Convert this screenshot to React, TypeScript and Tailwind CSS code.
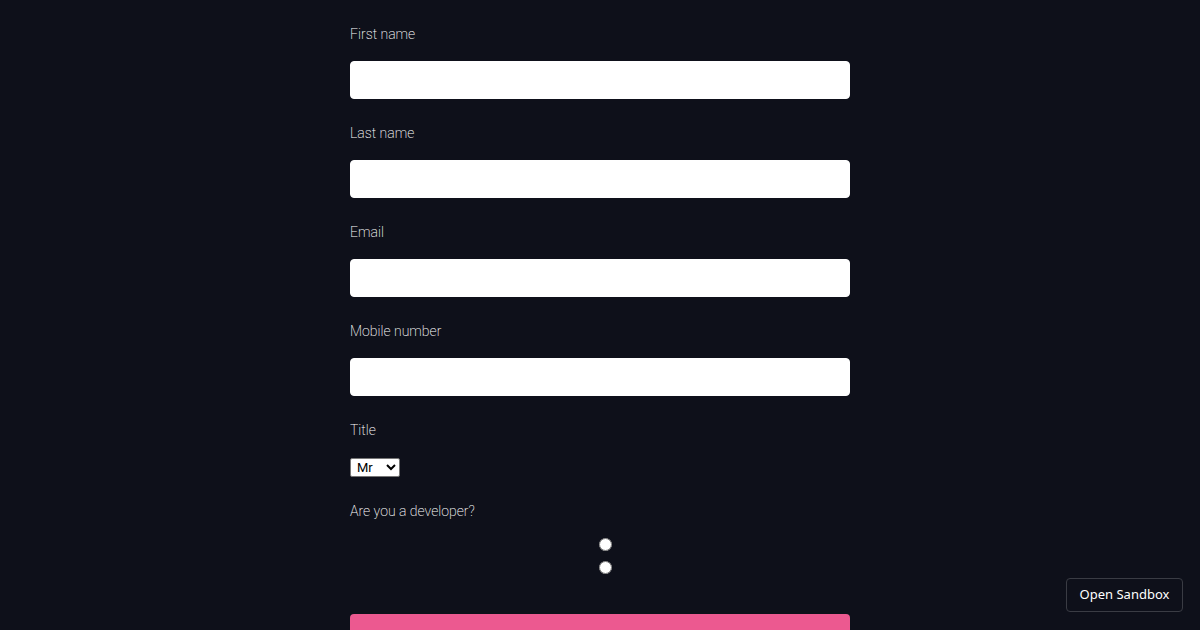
import React from "react";

const labelCls =
  "block h-[28px] leading-[28px] text-[14px] font-extralight text-white";
const inputCls =
  "block w-full h-[38px] rounded-[4px] border border-white bg-white px-[15px] text-[14px] text-black";

function Field({ label, first }: { label: string; first?: boolean }) {
  return (
    <div className={first ? "flex flex-col" : "flex flex-col mt-[20px]"}>
      <label className={labelCls}>{label}</label>
      <input className={inputCls + " mt-[13px]"} />
    </div>
  );
}

export default function App() {
  return (
    <div
      className="min-h-screen bg-[#0e101a] relative overflow-hidden"
      style={{ fontFamily: "Roboto, 'Liberation Sans', sans-serif" }}
    >
      <form className="w-[500px] mx-auto pt-[20px] flex flex-col">
        <Field label="First name" first />
        <Field label="Last name" />
        <Field label="Email" />
        <Field label="Mobile number" />
        <div className="flex flex-col mt-[20px]">
          <label className={labelCls}>Title</label>
          <select
            className="mt-[14px] w-[50px] h-[19px] bg-white text-black text-[13px] border border-[#767676] rounded-[2px] pl-[2px]"
            style={{ fontFamily: "Roboto, 'Liberation Sans', sans-serif" }}
            defaultValue="Mr"
          >
            <option>Mr</option>
            <option>Mrs</option>
            <option>Miss</option>
            <option>Dr</option>
          </select>
        </div>
        <div className="flex flex-col mt-[20px]">
          <label className={labelCls}>Are you a developer?</label>
          <div className="mt-[13px] flex flex-col gap-[10px] pl-[249px]">
            <input type="radio" name="dev" value="Yes" className="m-0 w-[13px] h-[13px]" />
            <input type="radio" name="dev" value="No" className="m-0 w-[13px] h-[13px]" />
          </div>
        </div>
        <button
          type="button"
          className="mt-[40px] h-[60px] w-full rounded-[4px] bg-[#ec5990] text-white text-[16px] uppercase tracking-[2px]"
        >
          Submit
        </button>
      </form>
      <button
        type="button"
        className="absolute right-[17px] top-[578px] h-[34px] w-[117px] rounded-[4px] border border-[#3a3c44] bg-[#0e101a] text-white text-[13px] font-normal"
        style={{ fontFamily: "'Noto Sans', 'Open Sans', sans-serif" }}
      >
        Open Sandbox
      </button>
    </div>
  );
}
